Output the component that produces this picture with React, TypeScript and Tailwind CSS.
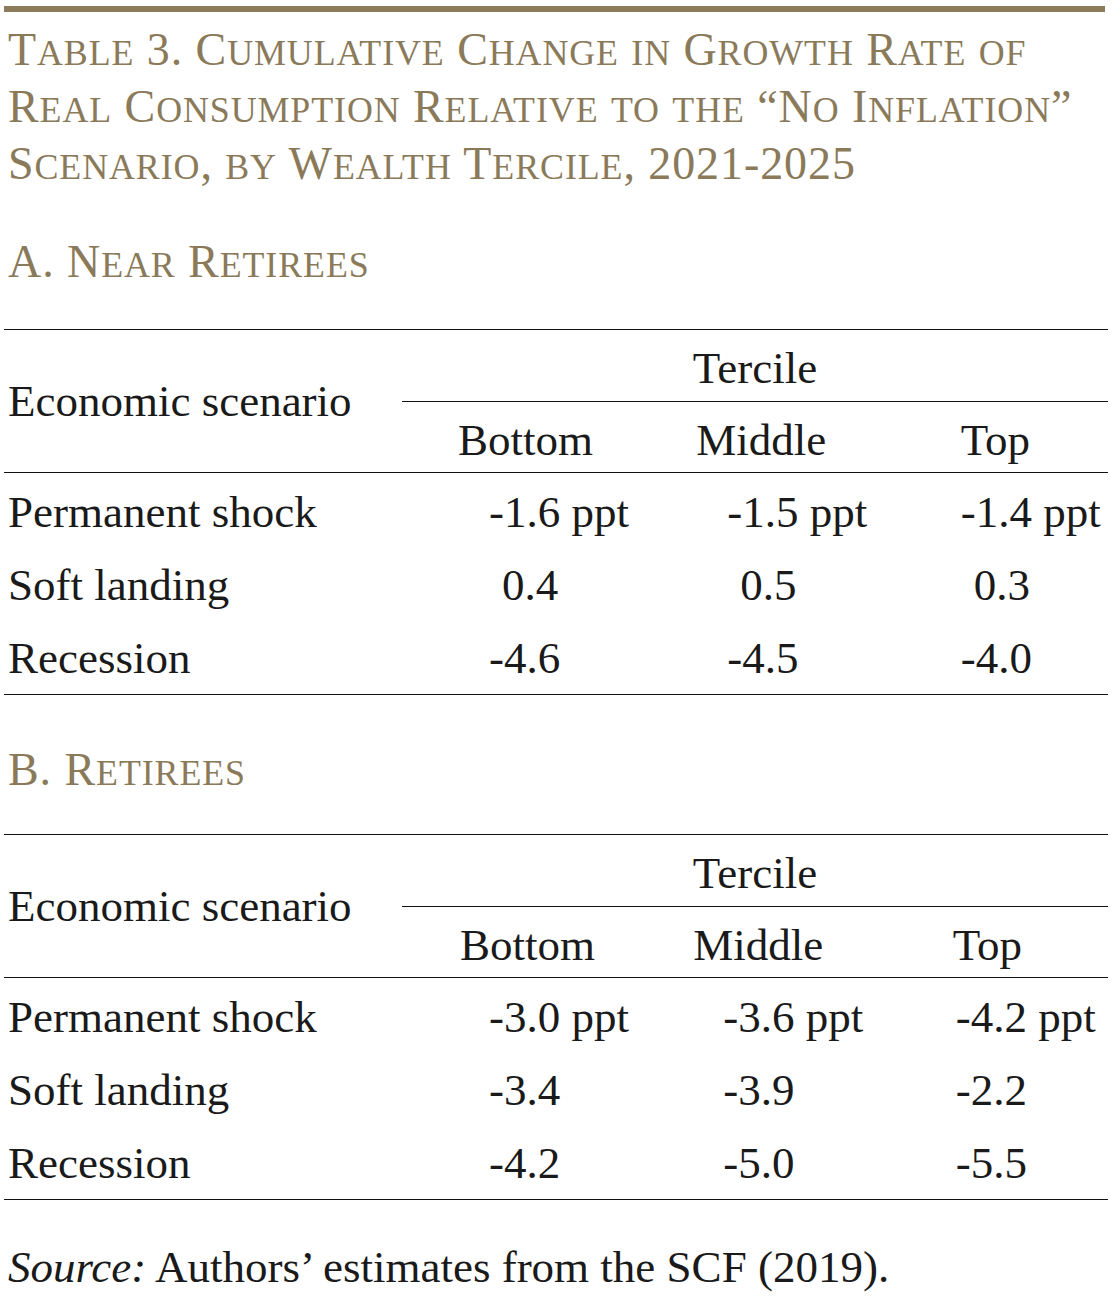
import React from 'react';

const GOLD = 'text-[#8a7a5a]';

// Hand-made small caps: lowercase letters are set as smaller capitals.
function SmallCaps({ text }: { text: string }) {
  const parts: { s: string; small: boolean }[] = [];
  for (const ch of text) {
    const small = ch >= 'a' && ch <= 'z';
    const last = parts[parts.length - 1];
    if (last && last.small === small) last.s += ch;
    else parts.push({ s: ch, small });
  }
  return (
    <>
      {parts.map((p, i) =>
        p.small ? (
          <span key={i} className="text-[0.78em] leading-none">
            {p.s.toUpperCase()}
          </span>
        ) : (
          <span key={i}>{p.s}</span>
        )
      )}
    </>
  );
}

type Row = { label: string; values: string[] };

interface PanelProps {
  heading: string;
  rows: Row[];
  offsets: number[];
  headOffsets: number[];
  gap: number;
}

function Cell({ value, offset }: { value: string; offset: number }) {
  const positive = !value.startsWith('-');
  return <div style={{ paddingLeft: offset + (positive ? 13 : 0) }}>{value}</div>;
}

function Panel({ heading, rows, offsets, headOffsets, gap }: PanelProps) {
  const heads = ['Bottom', 'Middle', 'Top'];
  return (
    <section>
      <h2 className={`${GOLD} whitespace-nowrap pl-[4px] text-[46px] leading-[57px] tracking-[0.02em]`}>
        <SmallCaps text={heading} />
      </h2>

      <div className="border-t border-[#111]" style={{ marginTop: gap }}>
        {/* header */}
        <div className="grid grid-cols-[398px_1fr]">
          <div className="flex items-center pl-[4px]">Economic scenario</div>
          <div>
            <div className="h-[71px] pt-[13px] text-center">Tercile</div>
            <div className="grid h-[71px] grid-cols-3 border-t border-[#111] pt-[13px]">
              {heads.map((h, i) => (
                <div key={h} style={{ paddingLeft: headOffsets[i] }}>
                  {h}
                </div>
              ))}
            </div>
          </div>
        </div>

        {/* body */}
        <div className="border-y border-[#111] pt-[2px]">
          {rows.map((r) => (
            <div key={r.label} className="grid h-[73px] grid-cols-[398px_1fr_1fr_1fr] items-center">
              <div className="pl-[4px]">{r.label}</div>
              {r.values.map((v, i) => (
                <Cell key={i} value={v} offset={offsets[i]} />
              ))}
            </div>
          ))}
        </div>
      </div>
    </section>
  );
}

export default function App() {
  const near: Row[] = [
    { label: 'Permanent shock', values: ['-1.6 ppt', '-1.5 ppt', '-1.4 ppt'] },
    { label: 'Soft landing', values: ['0.4', '0.5', '0.3'] },
    { label: 'Recession', values: ['-4.6', '-4.5', '-4.0'] },
  ];
  const retirees: Row[] = [
    { label: 'Permanent shock', values: ['-3.0 ppt', '-3.6 ppt', '-4.2 ppt'] },
    { label: 'Soft landing', values: ['-3.4', '-3.9', '-2.2'] },
    { label: 'Recession', values: ['-4.2', '-5.0', '-5.5'] },
  ];

  return (
    <div className="min-h-[1298px] w-[1112px] bg-white pl-[4px] pt-[6px] font-['Liberation_Serif',serif] text-[45px] leading-[50px] text-[#1a1a1a]">
      <div className="w-[1104px]">
        {/* gold rule */}
        <div className="h-[6px] w-[1101px] bg-[#8b7b5b]" />

        {/* title */}
        <h1 className={`${GOLD} mt-[9px] whitespace-nowrap pl-[4px] text-[46px] leading-[57px] tracking-[0.02em]`}>
          <div>
            <SmallCaps text="Table 3. Cumulative Change in Growth Rate of" />
          </div>
          <div>
            <SmallCaps text="Real Consumption Relative to the “No Inflation”" />
          </div>
          <div>
            <SmallCaps text="Scenario, by Wealth Tercile, 2021-2025" />
          </div>
        </h1>

        <div className="mt-[41px]">
          <Panel heading="A. Near Retirees" rows={near} offsets={[87, 90, 88]} headOffsets={[56, 59, 88]} gap={39} />
        </div>

        <div className="mt-[46px]">
          <Panel heading="B. Retirees" rows={retirees} offsets={[87, 86, 83]} headOffsets={[58, 56, 80]} gap={36} />
        </div>

        <p className="mt-[42px] pl-[4px]">
          <em>Source:</em> Authors’ estimates from the SCF (2019).
        </p>
      </div>
    </div>
  );
}
